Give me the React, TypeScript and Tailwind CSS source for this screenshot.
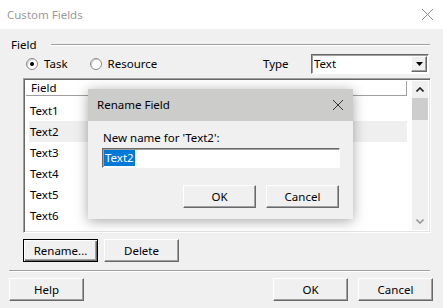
import React from 'react'

const font = { fontFamily: '"Noto Sans", "Liberation Sans", sans-serif' }

const raised =
  'bg-[#f0f0f0] border border-t-white border-l-white border-r-[#696969] border-b-[#696969] shadow-[inset_-1px_-1px_0_#a0a0a0]'

function Btn({ label, focused, className = '' }: { label: string; focused?: boolean; className?: string }) {
  return (
    <div
      className={
        'h-[23px] w-[75px] flex items-center justify-center text-[11.5px] text-black ' +
        (focused
          ? 'bg-[#f0f0f0] border border-black shadow-[inset_1px_1px_0_#fff,inset_-1px_-1px_0_#696969,inset_-2px_-2px_0_#a0a0a0] '
          : raised + ' ') +
        className
      }
    >
      {label}
    </div>
  )
}

function Radio({ checked, label }: { checked?: boolean; label: string }) {
  return (
    <div className="flex items-center gap-[6px]">
      <div className="w-[12px] h-[12px] rounded-full border border-[#8a8a8a] bg-white flex items-center justify-center shadow-[inset_1px_1px_0_#d0d0d0]">
        {checked && <div className="w-[4px] h-[4px] rounded-full bg-black" />}
      </div>
      <span className="text-[11.5px] leading-none">{label}</span>
    </div>
  )
}

function Chevron({ up, color }: { up?: boolean; color: string }) {
  return (
    <svg width="8" height="5" viewBox="0 0 8 5">
      <polyline
        points={up ? '0.5,4.5 4,1 7.5,4.5' : '0.5,0.5 4,4 7.5,0.5'}
        fill="none"
        stroke={color}
        strokeWidth="1.6"
      />
    </svg>
  )
}

function CloseX({ color, size }: { color: string; size: number }) {
  return (
    <svg width={size} height={size} viewBox="0 0 10 10">
      <path d="M0 0 L10 10 M10 0 L0 10" stroke={color} strokeWidth="0.9" />
    </svg>
  )
}

export default function App() {
  const rows = ['Text1', 'Text2', 'Text3', 'Text4', 'Text5', 'Text6']

  return (
    <div className="w-[443px] h-[308px] bg-[#f0f0f0] relative overflow-hidden text-black" style={font}>
      {/* window title */}
      <div className="h-[29px] bg-white flex items-center justify-between pl-[7px] pr-[10px]">
        <span className="text-[11.5px] text-[#9a9a9a]">Custom Fields</span>
        <CloseX color="#8c8c8c" size={11} />
      </div>

      <div className="pl-[9px] pr-[10px]">
        {/* Field group header */}
        <div className="h-[14px] mt-[9px] flex items-center">
          <span className="ml-[2px] text-[11.5px] leading-none">Field</span>
          <div className="ml-[15px] mr-[3px] flex-1 border-t border-[#a0a0a0] border-b border-b-white" />
        </div>

        {/* radios + type */}
        <div className="h-[20px] mt-[2px] flex items-center">
          <div className="w-[254px] flex items-center">
            <div className="ml-[17px]">
              <Radio checked label="Task" />
            </div>
            <div className="ml-[22px]">
              <Radio label="Resource" />
            </div>
          </div>
          <span className="text-[11.5px] leading-none">Type</span>
          <div className="ml-auto mr-[4px] w-[118px] h-[20px] bg-white border border-t-[#696969] border-l-[#696969] border-r-white border-b-white shadow-[inset_1px_1px_0_#a0a0a0] flex items-center">
            <span className="ml-[2px] text-[11.5px] leading-none flex-1">Text</span>
            <div className={'w-[16px] h-[16px] mr-px flex items-center justify-center ' + raised}>
              <svg width="7" height="4" viewBox="0 0 7 4">
                <path d="M0 0 H7 L3.5 4 Z" fill="#000" />
              </svg>
            </div>
          </div>
        </div>

        {/* list */}
        <div className="ml-[14px] mr-[2px] mt-[4px] h-[155px] bg-white border border-t-[#a0a0a0] border-l-[#a0a0a0] border-r-white border-b-white shadow-[inset_1px_1px_0_#696969,inset_-1px_-1px_0_#e3e3e3] flex p-[2px]">
          <div className="flex-1 flex flex-col">
            <div className="h-[15px] mr-[5px] border-r border-b border-[#a0a0a0] flex items-center">
              <span className="ml-[5px] text-[11.5px] leading-none">Field</span>
            </div>
            <div className="mt-[4px] flex flex-col">
              {rows.map((r) => (
                <div
                  key={r}
                  className={'h-[21px] ml-[3px] mr-[5px] flex items-center text-[11.5px] ' + (r === 'Text2' ? 'bg-[#efefef]' : '')}
                >
                  <span className="ml-px">{r}</span>
                </div>
              ))}
            </div>
          </div>
          {/* scrollbar */}
          <div className="w-[16px] bg-[#f0f0f0] flex flex-col items-stretch">
            <div className="h-[17px] flex items-center justify-center">
              <Chevron up color="#202020" />
            </div>
            <div className="h-[22px] bg-[#cdcdcd]" />
            <div className="flex-1" />
            <div className="h-[17px] flex items-center justify-center">
              <Chevron color="#9a9a9a" />
            </div>
          </div>
        </div>

        {/* rename / delete */}
        <div className="mt-[6px] ml-[14px] flex gap-[6px]">
          <Btn label="Rename..." focused />
          <Btn label="Delete" />
        </div>

        <div className="mt-[8px] mr-[3px] border-t border-[#a0a0a0] border-b border-b-white" />

        {/* bottom buttons */}
        <div className="mt-[6px] flex">
          <Btn label="Help" />
          <div className="ml-auto flex gap-[10px]">
            <Btn label="OK" />
            <Btn label="Cancel" />
          </div>
        </div>
      </div>

      {/* Rename Field modal */}
      <div className="absolute left-[88px] top-[89px] w-[265px] h-[130px] bg-[#f0f0f0] shadow-[0_2px_12px_rgba(0,0,0,0.35)] flex flex-col">
        <div className="h-[32px] bg-[#cccccb] flex items-center justify-between pl-[9px] pr-[10px]">
          <span className="text-[11.5px]">Rename Field</span>
          <CloseX color="#222" size={10} />
        </div>
        <div className="flex-1 flex flex-col px-[14px]">
          <span className="mt-[10px] ml-px text-[11.5px] leading-[14px]">New name for 'Text2':</span>
          <div className="mt-[3px] h-[20px] w-[238px] bg-white border border-t-[#696969] border-l-[#696969] border-r-white border-b-white shadow-[inset_1px_1px_0_#a0a0a0] flex items-center">
            <span className="ml-[1px] bg-[#0078d7] text-white text-[11.5px] leading-[16px] px-px">Text2</span>
          </div>
          <div className="mt-[17px] flex gap-[10px] ml-[81px]">
            <Btn label="OK" />
            <Btn label="Cancel" />
          </div>
        </div>
      </div>
    </div>
  )
}
